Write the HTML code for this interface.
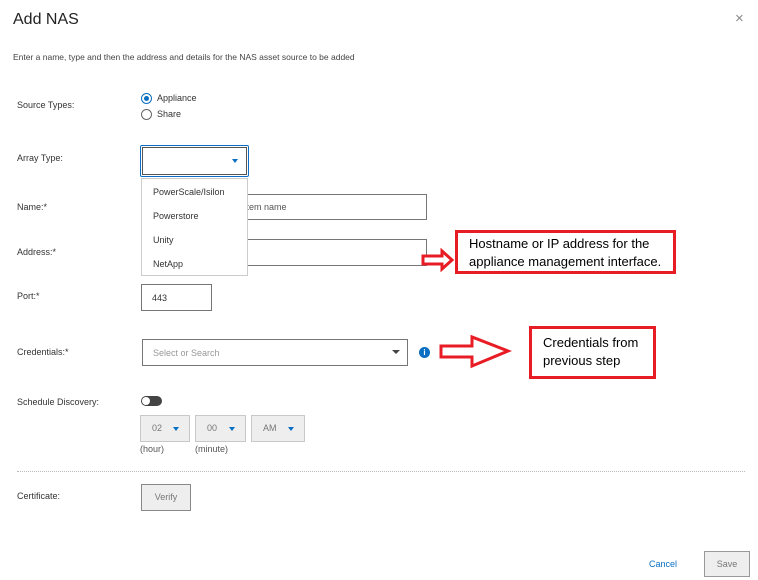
<!DOCTYPE html>
<html><head><meta charset="utf-8"><style>
*{margin:0;padding:0;box-sizing:border-box}
body{width:758px;height:580px;background:#fff;position:relative;overflow:hidden;font-family:"Liberation Sans",sans-serif;color:#333}
.a{position:absolute;white-space:nowrap}
.l{font-size:9px;color:#333}
.box{position:absolute;border:1px solid #767676;background:#fff}
.gb{position:absolute;border:1px solid #c8c8c8;background:#eee;font-size:9px;color:#777}
.tri{position:absolute;width:0;height:0;border-left:3.5px solid transparent;border-right:3.5px solid transparent;border-top:4px solid #0a6fc2}
.red{position:absolute;border:3px solid #e81c24;background:#fff;font-family:"Liberation Sans",sans-serif;font-size:13px;color:#000;line-height:18px;padding:0 0 0 11px}
</style></head><body>
<div class="a" style="left:13px;top:11px;font-size:16px;color:#222">Add NAS</div>
<div class="a" style="left:735px;top:10px;font-size:15px;color:#888">×</div>
<div class="a" style="left:13px;top:52px;font-size:8.5px;color:#444">Enter a name, type and then the address and details for the NAS asset source to be added</div>

<div class="a l" style="left:17px;top:100px">Source Types:</div>
<div class="a" style="left:141px;top:93px;width:11px;height:11px;border:1px solid #0a6fc2;border-radius:50%"></div>
<div class="a" style="left:144px;top:96px;width:5px;height:5px;background:#0a6fc2;border-radius:50%"></div>
<div class="a l" style="left:157px;top:93px">Appliance</div>
<div class="a" style="left:141px;top:109px;width:11px;height:11px;border:1px solid #666;border-radius:50%"></div>
<div class="a l" style="left:157px;top:109px">Share</div>

<div class="a l" style="left:17px;top:153px">Array Type:</div>
<div class="a" style="left:140px;top:145px;width:109px;height:32px;border:1px solid #0a6fc2;border-radius:2px"></div>
<div class="box" style="left:142px;top:147px;width:105px;height:28px;border-color:#555"></div>
<div class="tri" style="left:232px;top:159px"></div>

<div class="a l" style="left:17px;top:202px">Name:*</div>
<div class="box" style="left:141px;top:194px;width:286px;height:26px"></div>
<div class="a l" style="left:209px;top:202px;color:#555">Enter system name</div>
<div class="a l" style="left:17px;top:247px">Address:*</div>
<div class="box" style="left:141px;top:239px;width:286px;height:27px"></div>

<div class="a" style="left:141px;top:178px;width:107px;height:98px;border:1px solid #ccc;background:#fff"></div>
<div class="a l" style="left:153px;top:187px">PowerScale/Isilon</div>
<div class="a l" style="left:153px;top:211px">Powerstore</div>
<div class="a l" style="left:153px;top:235px">Unity</div>
<div class="a l" style="left:153px;top:259px">NetApp</div>

<div class="a l" style="left:17px;top:291px">Port:*</div>
<div class="box" style="left:141px;top:284px;width:71px;height:27px"></div>
<div class="a l" style="left:152px;top:293px">443</div>

<div class="a l" style="left:17px;top:347px">Credentials:*</div>
<div class="box" style="left:142px;top:339px;width:266px;height:27px"></div>
<div class="a l" style="left:153px;top:348px;color:#999">Select or Search</div>
<div class="a" style="left:392px;top:350px;width:0;height:0;border-left:4px solid transparent;border-right:4px solid transparent;border-top:4px solid #444"></div>
<div class="a" style="left:419px;top:347px;width:11px;height:11px;border-radius:50%;background:#0a6fc2;color:#fff;font-size:8px;font-weight:bold;text-align:center;line-height:11px">i</div>

<div class="a l" style="left:17px;top:397px">Schedule Discovery:</div>
<div class="a" style="left:141px;top:396px;width:21px;height:10px;border-radius:5px;background:#444"></div>
<div class="a" style="left:142px;top:397px;width:8px;height:8px;border-radius:50%;background:#fff"></div>
<div class="gb" style="left:140px;top:415px;width:50px;height:27px"><span class="a" style="left:11px;top:7px">02</span><div class="tri" style="left:32px;top:11px"></div></div>
<div class="gb" style="left:195px;top:415px;width:51px;height:27px"><span class="a" style="left:11px;top:7px">00</span><div class="tri" style="left:33px;top:11px"></div></div>
<div class="gb" style="left:251px;top:415px;width:54px;height:27px"><span class="a" style="left:11px;top:7px">AM</span><div class="tri" style="left:36px;top:11px"></div></div>
<div class="a l" style="left:140px;top:444px;color:#555">(hour)</div>
<div class="a l" style="left:195px;top:444px;color:#555">(minute)</div>

<div class="a" style="left:17px;top:471px;width:728px;border-top:1px dotted #bbb"></div>

<div class="a l" style="left:17px;top:491px">Certificate:</div>
<div class="gb" style="left:141px;top:484px;width:50px;height:27px;border-color:#888;text-align:center;line-height:25px">Verify</div>

<div class="a" style="left:649px;top:559px;font-size:9px;color:#0a6fc2">Cancel</div>
<div class="gb" style="left:704px;top:551px;width:46px;height:26px;border-color:#999;text-align:center;line-height:24px">Save</div>

<div class="red" style="left:455px;top:230px;width:221px;height:44px;padding-top:2px">Hostname or IP address for the<br>appliance management interface.</div>
<svg class="a" style="left:420px;top:248px" width="36" height="24"><path d="M3 8 H22 V3 L32 12 L22 21 V16 H3 Z" fill="#fff" stroke="#e81c24" stroke-width="3"/></svg>
<div class="red" style="left:529px;top:326px;width:127px;height:53px;padding-top:5px">Credentials from<br>previous step</div>
<svg class="a" style="left:438px;top:334px" width="74" height="36"><path d="M3 12 H34 V3 L70 17 L34 32 V23 H3 Z" fill="#fff" stroke="#e81c24" stroke-width="3"/></svg>
</body></html>
